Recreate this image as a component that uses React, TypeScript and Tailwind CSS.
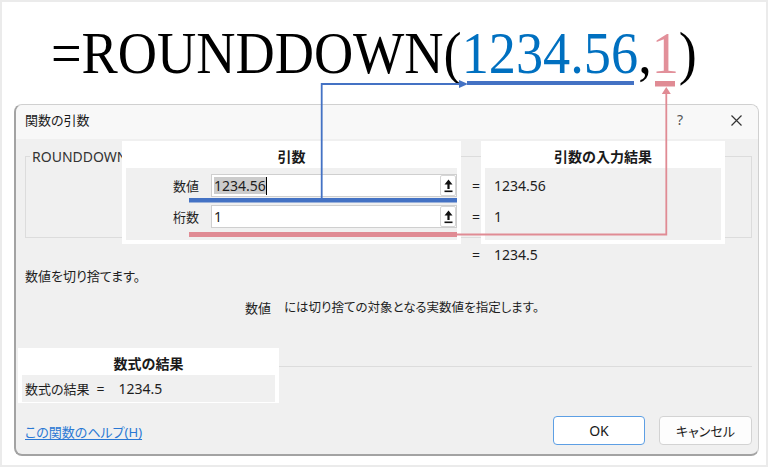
import React from 'react'

const BLUE = '#4472c4'
const PINK = '#e08b94'

// Excel RefEdit collapse button (arrow over a bar)
function RefButton() {
  return (
    <span className="flex h-[21px] w-[16px] shrink-0 items-center justify-center rounded-[2px] border border-[#d6d6d6] bg-white">
      <svg width="9" height="14" viewBox="0 0 9 14">
        <path d="M4.5 0.5 L8.5 5.5 L5.6 5.5 L5.6 10 L3.4 10 L3.4 5.5 L0.5 5.5 Z" fill="#111" />
        <rect x="0.5" y="11.5" width="8" height="1.6" fill="#111" />
      </svg>
    </span>
  )
}

function ArgRow({ label, value, selected }: { label: string; value: string; selected?: boolean }) {
  return (
    <div className="flex h-[23px] items-center">
      <div className="w-[73px] text-right">{label}</div>
      <div className="ml-[12px] flex h-[23px] flex-1 items-center border border-[#cfcfcf] bg-white pl-[2px]">
        <div className="flex flex-1 items-center text-[14px]">
          {selected ? (
            <>
              <span className="bg-[#cccccc] leading-[17px]">{value}</span>
              <span className="h-[18px] w-px bg-black" />
            </>
          ) : (
            <span>{value}</span>
          )}
        </div>
        <RefButton />
      </div>
    </div>
  )
}

function Panel({ title, className, children }: { title: string; className: string; children: React.ReactNode }) {
  return (
    <div className={`relative flex flex-col bg-white p-[4px] ${className}`}>
      <div className="flex h-[23px] shrink-0 items-center justify-center text-[14px] font-bold text-[#1a1a1a]">
        {title}
      </div>
      <div className="flex-1 bg-[#f0f0f0]">{children}</div>
    </div>
  )
}

function Connectors() {
  return (
    <svg
      className="pointer-events-none absolute -left-[2px] -top-[2px]"
      width="768"
      height="467"
      viewBox="0 0 768 467"
    >
      {/* blue: 数値 -> 1234.56 */}
      <rect x="467" y="81" width="167" height="4" fill={BLUE} />
      <polyline points="321.7,199 321.7,84 461,84" fill="none" stroke={BLUE} strokeWidth="1.8" />
      <path d="M459 80 L468 84 L459 88 Z" fill={BLUE} />
      <rect x="189" y="198" width="268" height="4.5" fill={BLUE} />

      {/* pink: 桁数 -> 1 */}
      <rect x="655" y="81" width="20" height="5.5" fill={PINK} />
      <path d="M666.3 87 L670.8 94 L661.8 94 Z" fill={PINK} />
      <polyline points="666.3,93 666.3,234.5 457,234.5" fill="none" stroke={PINK} strokeWidth="1.8" />
      <rect x="189" y="232" width="268" height="5" fill={PINK} />
    </svg>
  )
}

function Dialog() {
  return (
    <div className="relative ml-[12px] mt-[21px] flex h-[352px] w-[745px] flex-col rounded-[8px] border border-b-2 border-l-2 border-[#d0d0d0] border-b-[#a3a3a3] border-l-[#a3a3a3] bg-[#f0f0f0]">
      {/* title bar */}
      <div className="flex h-[34px] shrink-0 items-start rounded-t-[7px] bg-[#f8f8f8] pl-[9px] pt-[6px]">
        <span className="text-[#1a1a1a]">関数の引数</span>
        <div className="ml-auto flex items-center">
          <span className="w-[40px] text-center text-[14px] text-[#555]">?</span>
          <span className="ml-[14px] flex h-[18px] w-[44px] items-center justify-center">
            <svg width="11" height="11" viewBox="0 0 11 11">
              <path d="M0.5 0.5 L10.5 10.5 M10.5 0.5 L0.5 10.5" stroke="#333" strokeWidth="1.2" />
            </svg>
          </span>
        </div>
      </div>

      {/* group box frame */}
      <div className="absolute left-[9px] top-[51px] h-[82px] w-[727px] border border-[#dcdcdc]" />

      {/* arguments */}
      <div className="relative mt-[2px] flex">
        <div className="w-[106px] whitespace-nowrap pt-[7px]">
          <span className="ml-[14px] bg-[#f0f0f0] px-[2px] text-[14px] text-[#333]">ROUNDDOWN</span>
        </div>

        <Panel title="引数" className="h-[103px] w-[339px]">
          <div className="flex flex-col gap-[8px] pt-[6px]">
            <ArgRow label="数値" value="1234.56" selected />
            <ArgRow label="桁数" value="1" />
          </div>
        </Panel>

        <div className="w-[20px] pl-[11px] pt-[33px] text-[14px]">
          <div className="flex h-[23px] items-center">=</div>
          <div className="mt-[8px] flex h-[23px] items-center">=</div>
          <div className="mt-[15px] flex h-[23px] items-center">=</div>
        </div>

        <div className="flex flex-col">
          <Panel title="引数の入力結果" className="h-[103px] w-[244px]">
            <div className="flex flex-col gap-[8px] pl-[9px] pt-[6px] text-[14px]">
              <div className="flex h-[23px] items-center">1234.56</div>
              <div className="flex h-[23px] items-center">1</div>
            </div>
          </Panel>
          <div className="-mt-px flex h-[23px] items-center pl-[13px] text-[14px]">1234.5</div>
        </div>
      </div>

      <div className="mt-[1px] pl-[9px]">数値を切り捨てます。</div>
      <div className="mt-[14px] flex items-center pl-[229px]">
        <span>数値</span>
        <span className="ml-[13px] text-[12.5px]">には切り捨ての対象となる実数値を指定します。</span>
      </div>

      {/* formula result */}
      <div className="mt-[31px] flex">
        <div className="relative ml-[2px] flex h-[55px] w-[261px] flex-col bg-white px-[4px] pb-[1px] pt-[4px]">
          <div className="flex h-[23px] shrink-0 items-center justify-center text-[14px] font-bold text-[#1a1a1a]">
            数式の結果
          </div>
          <div className="flex flex-1 items-center bg-[#f0f0f0] pl-[3px]">
            <span>数式の結果</span>
            <span className="ml-[7px] text-[14px]">=</span>
            <span className="ml-[14px] text-[14px]">1234.5</span>
          </div>
        </div>
        <div className="mr-[6px] mt-[18px] h-px flex-1 bg-[#dcdcdc]" />
      </div>

      {/* footer */}
      <div className="mt-[13px] flex items-center">
        <a className="ml-[9px] mt-[3px] text-[#2a78d4] underline underline-offset-2">この関数のヘルプ(H)</a>
        <div className="flex-1" />
        <button className="h-[29px] w-[92px] rounded-[4px] border border-[#5d9fe4] bg-white text-[14px] text-[#1a1a1a]">
          OK
        </button>
        <button className="ml-[14px] mr-[6px] h-[29px] w-[93px] rounded-[4px] border border-[#d3d3d3] bg-[#fdfdfd] text-[#1a1a1a]">
          キャンセル
        </button>
      </div>
    </div>
  )
}

export default function App() {
  return (
    <div className="relative h-[467px] w-[768px] overflow-hidden border-2 border-[#ebebeb] bg-white font-['Noto_Sans','Noto_Sans_CJK_JP',sans-serif] text-[13px] leading-[18px] text-[#1e1e1e] [font-feature-settings:'palt']">
      <div className="h-[81px] pl-[49px] pt-[21px]">
        <div className="origin-left scale-x-[0.905] whitespace-nowrap font-['Liberation_Serif',serif] text-[60px] leading-none text-black">
          =ROUNDDOWN(<span className="text-[#0070c0]">1234.56</span>,<span className="text-[#e2909a]">1</span>)
        </div>
      </div>
      <Dialog />
      <Connectors />
    </div>
  )
}
